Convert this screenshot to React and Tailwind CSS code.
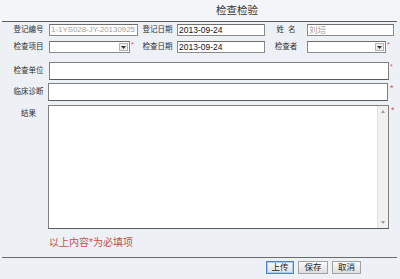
import React from 'react'

const FONT = "font-['Liberation_Sans','Noto_Sans_CJK_SC',sans-serif]"

function Label({ w, children, className = '' }) {
  return (
    <div className={`shrink-0 text-center text-[7.5px] leading-none text-[#333] ${className}`} style={{ width: w }}>
      {children}
    </div>
  )
}

function Star({ className = '' }) {
  return <span className={`text-[#e0505a] leading-none ${className}`}>*</span>
}

function TextBox({ w, value, muted, size = 'text-[8.5px]' }) {
  return (
    <div
      className={`h-[12px] shrink-0 bg-white border border-[#8a8a8a] border-t-[#6f6f6f] pl-[1px] overflow-hidden whitespace-nowrap leading-[10px] ${size} ${muted ? 'text-[#a0a0a0]' : 'text-[#111]'}`}
      style={{ width: w }}
    >
      {value}
    </div>
  )
}

function SelectBox({ w }) {
  return (
    <div className="h-[12px] shrink-0 bg-white border border-[#8a8a8a] border-t-[#6f6f6f] flex justify-end items-center pr-[1px]" style={{ width: w }}>
      <div className="w-[9px] h-[8px] border border-[#b5b5b5] bg-[#ececec] flex items-center justify-center">
        <svg width="5" height="3" viewBox="0 0 5 3"><path d="M0 0h5L2.5 3z" fill="#333" /></svg>
      </div>
    </div>
  )
}

function Btn({ children, w, active }) {
  return (
    <button
      className={`h-[13px] text-[8.5px] leading-none text-[#222] bg-gradient-to-b from-[#fafafa] to-[#dedede] border ${active ? 'border-[#4f84c4] shadow-[inset_0_0_0_1px_#a9c9ee]' : 'border-[#a2a2a2]'}`}
      style={{ width: w }}
    >
      {children}
    </button>
  )
}

export default function App() {
  return (
    <div className={`w-[400px] h-[279px] bg-[#edf0f4] flex flex-col overflow-hidden ${FONT}`}>
      {/* title */}
      <div className="h-[21px] bg-[#f3f5f8] flex items-center justify-center pl-[74px] text-[10.5px] text-[#333]">
        检查检验
      </div>
      <div className="h-px bg-[#5e5e5e] ml-[2px] mr-[3px]" />

      {/* row 1 */}
      <div className="flex items-center h-[12px] mt-[2px] pl-[10px]">
        <Label w={37}>登记编号</Label>
        <div className="w-[2px]" />
        <TextBox w={89} value="1-1YS028-JY-20130925" muted size="text-[7.9px]" />
        <Label w={39}>登记日期</Label>
        <TextBox w={88} value="2013-09-24" />
        <Label w={42}>姓&nbsp;&nbsp;名</Label>
        <TextBox w={87} value="刘培" muted />
      </div>

      {/* row 2 */}
      <div className="flex items-center h-[12px] mt-[5px] pl-[10px]">
        <Label w={37}>检查项目</Label>
        <div className="w-[2px]" />
        <div className="w-[89px] shrink-0 flex items-start h-[12px]">
          <SelectBox w={81} />
          <Star className="text-[7px] ml-[1px]" />
        </div>
        <Label w={39}>检查日期</Label>
        <TextBox w={88} value="2013-09-24" />
        <Label w={42}>检查者</Label>
        <div className="flex items-start h-[12px]">
          <SelectBox w={79} />
          <Star className="text-[7px] ml-[1px]" />
        </div>
      </div>

      {/* row 3 */}
      <div className="flex items-center h-[18px] mt-[9px] pl-[10px]">
        <Label w={37}>检查单位</Label>
        <div className="w-[2px]" />
        <div className="w-[340px] h-[18px] bg-white border border-[#808080] border-b-[#5a5a5a]" />
        <Star className="self-start text-[7px] ml-[1px] mt-[1px]" />
      </div>

      {/* row 4 */}
      <div className="flex items-center h-[18px] mt-[3px] pl-[10px]">
        <Label w={37}>临床诊断</Label>
        <div className="w-[1px]" />
        <div className="w-[340px] h-[18px] bg-white border border-[#808080] border-b-[#5a5a5a]" />
        <Star className="self-start text-[9px] ml-[2px] mt-[1px]" />
      </div>

      {/* row 5 */}
      <div className="flex items-start h-[124px] mt-[4px] pl-[10px]">
        <Label w={37} className="mt-[5px]">结果</Label>
        <div className="w-[1px]" />
        <div className="w-[341px] h-[124px] bg-white border border-[#808080] border-b-[#5a5a5a] flex justify-end">
          <div className="w-[11px] h-full bg-[#f1f1f1] border-l border-[#e2e2e2] flex flex-col items-center justify-between py-[4px]">
            <svg width="4" height="3" viewBox="0 0 4 3"><path d="M2 0L4 3H0z" fill="#9a9a9a" /></svg>
            <svg width="4" height="3" viewBox="0 0 4 3"><path d="M0 0h4L2 3z" fill="#9a9a9a" /></svg>
          </div>
        </div>
        <Star className="text-[9px] ml-[2px] mt-[1px]" />
      </div>

      {/* note */}
      <div className="mt-[8px] pl-[49px] text-[10px] leading-[12px] text-[#c4504c]">以上内容*为必填项</div>

      <div className="h-px bg-[#6a6a6a] ml-[2px] mr-[3px] mt-[8px]" />

      {/* buttons */}
      <div className="flex items-center gap-[4px] mt-[3px] pl-[266px]">
        <Btn w={28} active>上传</Btn>
        <Btn w={30}>保存</Btn>
        <Btn w={29}>取消</Btn>
      </div>
    </div>
  )
}
